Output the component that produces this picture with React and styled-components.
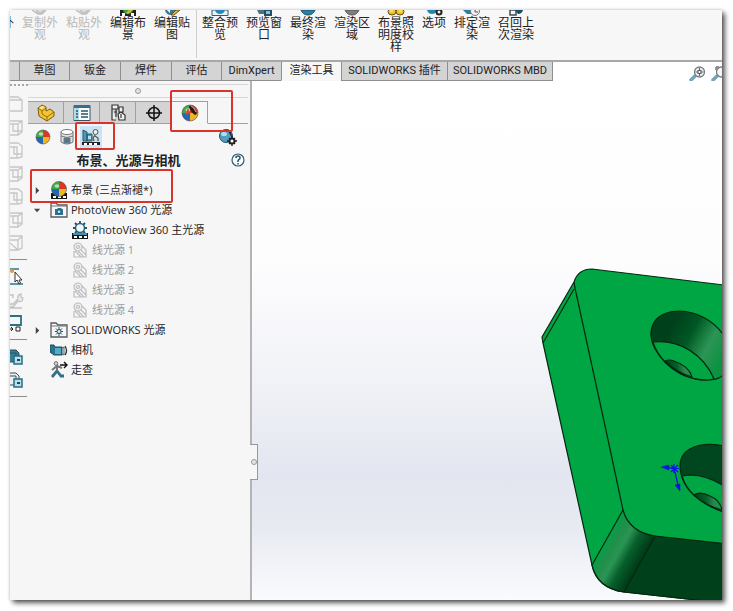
import React from "react";
import styled, { createGlobalStyle } from "styled-components";

const ribbonItems = [
  { label: "复制外观", icon: "gray", disabled: true },
  { label: "粘贴外观", icon: "gray", disabled: true },
  { label: "编辑布景", icon: "scene" },
  { label: "编辑贴图", icon: "decal", last: true },
  { label: "整合预览", icon: "preview" },
  { label: "预览窗口", icon: "window" },
  { label: "最终渲染", icon: "final" },
  { label: "渲染区域", icon: "region" },
  { label: "布景照明度校样", icon: "proof" },
  { label: "选项", icon: "options", narrow: true },
  { label: "排定渲染", icon: "schedule" },
  { label: "召回上次渲染", icon: "recall" },
];

const tabs = [
  { label: "草图", width: 50 },
  { label: "钣金", width: 51 },
  { label: "焊件", width: 51 },
  { label: "评估", width: 50 },
  { label: "DimXpert", width: 60 },
  { label: "渲染工具", width: 60, active: true },
  { label: "SOLIDWORKS 插件", width: 106 },
  { label: "SOLIDWORKS MBD", width: 106 },
];

const treeItems = [
  { label: "布景 (三点渐褪*)", icon: "sceneBall", arrow: "right", marked: true },
  { label: "PhotoView 360 光源", icon: "folderCamera", arrow: "down" },
  { label: "PhotoView 360 主光源", icon: "mainLight", child: true },
  { label: "线光源 1", icon: "light", child: true, muted: true },
  { label: "线光源 2", icon: "light", child: true, muted: true },
  { label: "线光源 3", icon: "light", child: true, muted: true },
  { label: "线光源 4", icon: "light", child: true, muted: true },
  { label: "SOLIDWORKS 光源", icon: "folderLight", arrow: "right" },
  { label: "相机", icon: "camera" },
  { label: "走查", icon: "walk" },
];

const RibbonIcon = ({ name }) => (
  <svg width="24" height="6" viewBox="0 0 24 6" aria-hidden="true">
    {name === "gray" && (
      <g fill="none" stroke="#bdbdbd" strokeWidth="1.500">
        <path d="M4 0l6 4h4l4-4" />
        <path d="M8 0q4 6 8 0" fill="#dcdcdc" />
      </g>
    )}
    {name === "scene" && (
      <g>
        <path d="M4 0h16v6H4z" fill="#222" />
        <path d="M6 3h3v3H6zM15 3h3v3h-3z" fill="#fff" />
        <path d="M7 0h10q-1 4-5 4T7 0z" fill="#35a23b" />
        <path d="M13 0h4l-5 4-2-1z" fill="#e5b528" />
      </g>
    )}
    {name === "decal" && (
      <g>
        <path d="M5 0h12q-1 5-6 5T5 0z" fill="#3c7896" />
        <path d="M11 5l5-5h4l-6 5z" fill="#efb52b" stroke="#6b4d10" />
        <path d="M7 0h3v3z" fill="#fff" />
      </g>
    )}
    {name === "preview" && (
      <g>
        <path d="M4 0h16v5.500H4z" fill="#eef5f8" stroke="#325c70" />
        <path d="M7 0h10q-1 4-5 4T7 0z" fill="#2589b5" />
      </g>
    )}
    {name === "window" && (
      <g>
        <path d="M5 0h8v4H7z" fill="#526f7c" />
        <path d="M12 0h8v6h-8z" fill="#244e63" />
        <path d="M14 1h4v3h-4z" fill="#80c2db" />
      </g>
    )}
    {name === "final" && <path d="M5 0h14q-2 5-7 5T5 0z" fill="#2581a9" stroke="#17526c" />}
    {name === "region" && <path d="M5 0h14q-2 5-7 5T5 0z" fill="#7c7f82" stroke="#555" />}
    {name === "proof" && (
      <g fill="#efc52d" stroke="#624d16">
        <ellipse cx="8" cy="1.500" rx="4" ry="3.500" />
        <ellipse cx="16" cy="1.500" rx="4" ry="3.500" />
        <path d="M6 1h3M15 1h3" stroke="#fff2a6" />
      </g>
    )}
    {name === "options" && (
      <g>
        <path d="M5 0h10q-1 4-5 4T5 0z" fill="#2585ae" />
        <circle cx="17" cy="2" r="2.500" fill="#eee" stroke="#222" strokeWidth="2" />
      </g>
    )}
    {name === "schedule" && (
      <g>
        <path d="M3 0h10v4H7z" fill="#287fa4" />
        <circle cx="15" cy="1" r="4.500" fill="#f2f2f2" stroke="#777" />
        <path d="M15 0v2h3" fill="none" stroke="#555" />
      </g>
    )}
    {name === "recall" && (
      <g>
        <path d="M6 0h6v5H6z" fill="#f5f5f5" stroke="#3b4d55" strokeWidth="1.500" />
        <path d="M11 0h8q-1 4-5 4z" fill="#174e67" />
      </g>
    )}
  </svg>
);

const ColorBall = ({ cx, cy, r }) => (
  <g>
    <path d={`M${cx} ${cy}L${cx - r} ${cy}A${r} ${r} 0 0 1 ${cx} ${cy - r}z`} fill="#3fac46" />
    <path d={`M${cx} ${cy}V${cy - r}A${r} ${r} 0 0 1 ${cx + r} ${cy}z`} fill="#df3427" />
    <path d={`M${cx} ${cy}H${cx + r}A${r} ${r} 0 0 1 ${cx} ${cy + r}z`} fill="#efb623" />
    <path d={`M${cx} ${cy}V${cy + r}A${r} ${r} 0 0 1 ${cx - r} ${cy}z`} fill="#2467b5" />
    <ellipse cx={cx - 2} cy={cy - 3} rx="2.500" ry="1.800" fill="#fff" opacity="0.6" />
    <circle cx={cx} cy={cy} r={r} fill="none" stroke="#4b4b4b" strokeWidth="0.600" />
  </g>
);

const Film = () => (
  <g>
    <path d="M1 12h16v6H1z" fill="#181818" />
    <path d="M3 15h3v2H3zM8 15h3v2H8zM13 15h3v2h-3z" fill="#fff" />
  </g>
);

const Icon = ({ name, size = 18 }) => (
  <svg width={size} height={size} viewBox="0 0 18 18" aria-hidden="true">
    {name === "part" && (
      <g stroke="#7d5b09" strokeLinejoin="round">
        <path d="M1 4l4-3 4 2v4l4-2 4 3v4l-7 5-8-5z" fill="#f5c52f" />
        <path d="M1 4l4 3v3l5 3 7-5M5 7l4-3M10 17v-4" fill="none" strokeWidth="0.800" />
        <path d="M5 2l3 1-3 2-3-1z" fill="#ffe694" stroke="none" />
      </g>
    )}
    {name === "properties" && (
      <g>
        <path d="M1 1.500h16v15H1z" fill="#fff" stroke="#315466" />
        <path d="M1 1h16v3H1z" fill="#31718c" />
        <path d="M1 4h5v12H1z" fill="#b5d9e6" />
        <path d="M3 7h2M3 10h2M3 13h2M8 7h7M8 10h7M8 13h7" stroke="#27566b" strokeWidth="1.400" />
      </g>
    )}
    {name === "config" && (
      <g fill="#f1f1f1" stroke="#333" strokeWidth="1.200">
        <path d="M3 1h6v4H3zM3 5v11h4M7 5v8" />
        <path d="M10 3h4v5h-4zM9 10l3-2 4 3v5h-6z" />
        <path d="M12 10v4M5 8h3" />
      </g>
    )}
    {name === "target" && (
      <g fill="none" stroke="#111" strokeWidth="1.500">
        <circle cx="9" cy="9" r="5.500" />
        <path d="M9 1v16M1 9h16" />
      </g>
    )}
    {name === "display" && (
      <g>
        <ColorBall cx={9} cy={9} r={8} />
        <path d="M9 9L4 11l3-7z" fill="#e64331" />
        <path d="M8 2q4-1 8 8l-2 1q-5-3-6-9z" fill="#251b18" />
        <path d="M10 2q3 1 5 6" fill="none" stroke="#b7aaa3" />
      </g>
    )}
    {name === "ball" && <ColorBall cx={9} cy={9} r={7} />}
    {name === "sceneBall" && (
      <g>
        <Film />
        <ColorBall cx={9} cy={8} r={7.5} />
      </g>
    )}
    {name === "database" && (
      <g stroke="#777">
        <path d="M3 4v10q6 4 12 0V4z" fill="#dfe2e4" />
        <ellipse cx="9" cy="4" rx="6" ry="2.500" fill="#fff" />
        <path d="M3 8q6 3 12 0" fill="none" />
        <path d="M6 10h6v5H6z" fill="#427d94" />
      </g>
    )}
    {name === "sceneLights" && (
      <g>
        <path d="M0 14h18v3H0z" fill="#222" />
        <path d="M2 15h3v2H2zM7 15h3v2H7zM12 15h3v2h-3z" fill="#fff" />
        <path d="M1 2l4 2v9H1zM5 6h5v7H5z" fill="#4d9ab5" stroke="#24566b" />
        <path d="M6 8h3v3H6z" fill="#b9dfeb" />
        <circle cx="13.500" cy="4" r="2.500" fill="#eee" stroke="#555" />
        <path d="M13 7l-2 3 1 3M13 8l3 2v3" fill="none" stroke="#555" strokeWidth="1.300" />
      </g>
    )}
    {name === "sphereGear" && (
      <g>
        <circle cx="7" cy="8" r="6.500" fill="#4e9fc0" stroke="#245268" />
        <ellipse cx="5" cy="6" rx="3" ry="2" fill="#b5dce9" />
        <path d="M8 1q5 2 5 9z" fill="#162833" />
        <circle cx="13" cy="13" r="2.500" fill="#fff" stroke="#222" strokeWidth="2" />
        <path d="M13 8v2M13 16v2M8 13h2M16 13h2M10 10l1 1M15 15l1 1M16 10l-1 1M11 15l-1 1" stroke="#222" strokeWidth="1.400" />
      </g>
    )}
    {(name === "folderCamera" || name === "folderLight") && (
      <g>
        <path d="M1 2h5l2 2h9v12H1z" fill="#f5f5f5" stroke="#57595b" strokeWidth="1.300" />
        <path d="M1 5h16" stroke="#777" />
        {name === "folderCamera" ? (
          <g>
            <path d="M5 8h2l1-1h3l1 1h1v6H5z" fill="#2a7896" />
            <circle cx="9" cy="10.800" r="2" fill="#b8e1ed" stroke="#174e64" />
          </g>
        ) : (
          <g stroke="#25556b">
            <path d="M9 6v9M5 10.500h8M6 7.500l6 6M12 7.500l-6 6" />
            <circle cx="9" cy="10.500" r="2" fill="#d6edf4" />
          </g>
        )}
      </g>
    )}
    {name === "mainLight" && (
      <g>
        <Film />
        <path d="M9 0v14M2 7h14M4 2l10 10M14 2L4 12" stroke="#1f5268" strokeWidth="1.800" />
        <circle cx="9" cy="7" r="4.500" fill="#edf7fa" stroke="#26617a" strokeWidth="1.500" />
        <path d="M2 12h14v2H2z" fill="#4293ae" />
      </g>
    )}
    {name === "light" && (
      <g fill="none" stroke="#bdbdbd" strokeWidth="1.200">
        <path d="M3 10v6h12V9l-4-4M4 10l6 6M7 10l6 6M10 9l5 5" />
        <circle cx="7" cy="6" r="4" fill="#eee" />
        <circle cx="7" cy="6" r="1.500" />
      </g>
    )}
    {name === "camera" && (
      <g>
        <path d="M0 4h4l1 2h7v8H4L0 11z" fill="#26758f" stroke="#234a59" />
        <path d="M5 7h6v6H5z" fill="#55acc6" />
        <path d="M12 7l2-1v8l-2-1z" fill="#d8e9ee" stroke="#234a59" strokeWidth="0.800" />
        <path d="M15 5q3 5 0 9" fill="none" stroke="#333" strokeWidth="1.400" />
      </g>
    )}
    {name === "walk" && (
      <g fill="none">
        <circle cx="6" cy="2.500" r="1.800" fill="#ddd" stroke="#666" />
        <path d="M7 5v5M2 9l5-4 5 2" stroke="#777" strokeWidth="2" />
        <path d="M7 10l-5 6M7 10l4 5h3" stroke="#2f708b" strokeWidth="2.800" />
        <path d="M10 4h6M14 1l3 3-3 3" stroke="#111" strokeWidth="1.400" />
      </g>
    )}
    {name === "help" && (
      <g fill="none" stroke="#2c5c74" strokeWidth="1.200">
        <circle cx="9" cy="9" r="6" fill="#fafcfc" />
        <path d="M7 7q0-2 2-2t2 2q0 1-1 1.500T9 10v1M9 12v1.500" strokeWidth="1.600" />
      </g>
    )}
    {(name === "zoomFit" || name === "zoomArea") && (
      <g>
        <path d="M6 10l-4 4" stroke="#78a4ba" strokeWidth="3.500" strokeLinecap="round" />
        <circle cx="10.500" cy="6" r="5" fill="#f5f7f8" stroke="#777d81" strokeWidth="1.300" />
        {name === "zoomFit" ? (
          <path d="M10.500 2v2M10.500 8v2M6.500 6h2M12.500 6h2M9 4.500h3v3H9z" fill="none" stroke="#5f6468" strokeWidth="1.200" />
        ) : (
          <path d="M5 1h3M5 1v3" fill="none" stroke="#777" strokeWidth="1.500" />
        )}
      </g>
    )}
  </svg>
);

/* side toolbar glyphs, the left half of each one is out of view */
const SideIcon = ({ name }) => (
  <svg width="18" height="20" viewBox="0 0 18 20" aria-hidden="true">
    {name.startsWith("cube") && (
      <g fill="none" stroke="#c6c6c6" strokeWidth="1.300">
        {name === "cube0" && <path d="M0 5h12v11H0M0 2h8l4 3" />}
        {name === "cube1" && <path d="M0 6h8v11H0M8 6l4-3v11l-4 3M0 3h12M3 6v7h9" />}
        {name === "cube2" && <path d="M0 2h8l4 3v11l-4 1H0M0 6h7v11M4 6v7h8" />}
        {name === "cube3" && <path d="M0 3h12v12l-4 2H0M0 7h8v10M8 7l4-4M0 10l8 7" />}
      </g>
    )}
    {name === "select" && (
      <g>
        <path d="M0 2h9M0 17h13" stroke="#2e7690" strokeWidth="1.500" />
        <circle cx="2" cy="4" r="2" fill="#df9736" />
        <path d="M5 5v10l2-2 2 4 1.500-1L9 13h3z" fill="#fff" stroke="#333" />
      </g>
    )}
    {name === "wrench" && (
      <path d="M0 14h3l5-5q-1-4 3-5v3l2 1-1 3q-3 1-4 0l-5 6H0M0 5h3v3M0 18h12" fill="#eee" stroke="#c2c2c2" strokeWidth="1.300" />
    )}
    {name === "screen" && (
      <g>
        <path d="M0 3h11v9H0" fill="none" stroke="#2b7088" strokeWidth="1.800" />
        <path d="M0 16h3M1 14l2 2-2 2" fill="none" stroke="#222" />
        <path d="M6 14h4v4H6z" fill="#fff" stroke="#222" />
      </g>
    )}
    {(name === "copyBlue" || name === "copyWhite") && (
      <g>
        <path d="M0 3h6l3 3v9H0" fill={name === "copyBlue" ? "#347f98" : "#eee"} stroke="#344c56" />
        <path d="M0 6h6v5" fill="none" stroke="#344c56" />
        <path d="M4 9h8v8H4z" fill="#b9dfea" stroke="#246d88" strokeWidth="1.500" />
        <path d="M7 12h3v2H7z" fill="#174d64" />
      </g>
    )}
  </svg>
);

const Model = () => (
  <svg width="190" height="340" viewBox="532 260 190 340" role="img" aria-label="Part">
    <defs>
      <linearGradient id="fillet" gradientUnits="userSpaceOnUse" x1="606" y1="539" x2="640" y2="558">
        <stop offset="0" stopColor="#02a045" />
        <stop offset="0.250" stopColor="#218f4b" />
        <stop offset="0.450" stopColor="#2b9454" />
        <stop offset="0.700" stopColor="#07602b" />
        <stop offset="1" stopColor="#003f1b" />
      </linearGradient>
      <linearGradient id="bore" gradientUnits="userSpaceOnUse" x1="672" y1="325" x2="724" y2="354">
        <stop offset="0" stopColor="#00401b" />
        <stop offset="0.350" stopColor="#005724" />
        <stop offset="0.500" stopColor="#127438" />
        <stop offset="0.700" stopColor="#2d9456" />
        <stop offset="1" stopColor="#0c9341" />
      </linearGradient>
      <linearGradient id="smallBore">
        <stop offset="0" stopColor="#00401b" />
        <stop offset="0.450" stopColor="#04602a" />
        <stop offset="0.700" stopColor="#2e8350" />
        <stop offset="1" stopColor="#06a044" />
      </linearGradient>
    </defs>
    <g stroke="#06280f" strokeWidth="1.200" strokeLinejoin="round">
      <path d="M574 282Q578 269 592 269L600 270L724 285V604L697 600L624 592Q597 588 592 565L543 343L542 337z" fill="#00a644" />
      <path d="M592 565L623 510Q629 532 655 536L624 592Q597 588 592 565z" fill="url(#fillet)" />
      <path d="M655 536L724 543.500V604L697 600L624 592z" fill="#00401b" />
      <path d="M574 282L575 288L607 435L623 510M574 289L543 343" fill="none" />
      <path d="M651 336C650 320 662 311 679 311C697 311 713 321 722 333C740 350 738 363 722 376Q717 380 707 380C690 380 677 374 665 362Q652 349 651 336z" fill="url(#bore)" />
      <path d="M653 342C680 339 704 355 714 379Q711 380 707 380C690 380 677 374 665 362Q656 352 653 342z" fill="#00a644" />
      <path d="M665 361Q669 359 674 361Q689 366 692 377Q677 373 665 361z" fill="url(#smallBore)" />
      <path d="M724 446C700 441 681 448 680 465Q680 483 695 496Q708 507 724 512z" fill="#00461e" />
      <path d="M682 476Q702 472 724 486V512Q708 507 695 496Q685 487 682 476z" fill="#00a644" />
      <path d="M694 495Q700 491 710 496Q720 500 722 510Q706 506 694 495z" fill="url(#smallBore)" />
    </g>
    <g stroke="#0b17d8" fill="#0b17d8" strokeWidth="1.200">
      <path d="M674 468L666 467.500M674 468L678 485M671 465l7 7M678 465l-7 7M674 464v9M670 468.500h9" />
      <path d="M661 467l8-2v5zM680 491l-5-6 5-1z" strokeWidth="0.500" />
    </g>
  </svg>
);

const sideTools = [
  "cube0", "cube1", "cube2", "cube1", "cube2", "cube1", "cube3", "line",
  "select", "wrench", "screen", "line",
  "copyBlue", "copyWhite", "line",
];

const panelTabs = ["part", "properties", "config", "target", "display"];

const App = () => {
  return (
    <>
      <GlobalStyle />
      <Page>
        <Window>
          <Ribbon>
            <CutLabel>外</CutLabel>
            {ribbonItems.map((item) => (
              <React.Fragment key={item.label}>
                <RibbonButton disabled={item.disabled} $narrow={item.narrow}>
                  <RibbonIcon name={item.icon} />
                  <span>{item.label}</span>
                </RibbonButton>
                {item.last && <Separator />}
              </React.Fragment>
            ))}
          </Ribbon>
          <TabStrip>
            <TabStub />
            {tabs.map((tab) => (
              <Tab key={tab.label} $width={tab.width} $active={tab.active}>
                {tab.label}
              </Tab>
            ))}
            <ViewTools>
              <IconButton aria-label="Zoom to fit"><Icon name="zoomFit" /></IconButton>
              <CutButton aria-label="Zoom to area"><Icon name="zoomArea" /></CutButton>
            </ViewTools>
          </TabStrip>
          <Workspace>
            <SideBar>
              <Dots />
              {sideTools.map((tool, i) =>
                tool === "line" ? (
                  <SideLine key={i} />
                ) : (
                  <SideButton key={i} aria-label={tool}>
                    <SideIcon name={tool} />
                  </SideButton>
                )
              )}
            </SideBar>
            <Panel>
              <Grip><Knob /></Grip>
              <PanelTabs>
                {panelTabs.map((tab) => (
                  <PanelTab key={tab} aria-label={tab} $active={tab === "display"}>
                    <Icon name={tab} />
                    {tab === "display" && <TabMark />}
                  </PanelTab>
                ))}
                <PanelTabsEnd />
              </PanelTabs>
              <PanelTools>
                <IconButton aria-label="Appearances"><Icon name="ball" /></IconButton>
                <IconButton aria-label="Decals"><Icon name="database" /></IconButton>
                <SelectedButton aria-label="Scene, lights and cameras">
                  <Icon name="sceneLights" />
                  <ToolMark />
                </SelectedButton>
                <EndButton aria-label="Render options"><Icon name="sphereGear" /></EndButton>
              </PanelTools>
              <TitleRow>
                <Title>布景、光源与相机</Title>
                <IconButton aria-label="Help"><Icon name="help" /></IconButton>
              </TitleRow>
              <Tree>
                {treeItems.map((item) => (
                  <li key={item.label}>
                    <TreeRow $child={item.child} $muted={item.muted}>
                      <Arrow viewBox="0 0 8 8" aria-hidden="true">
                        {item.arrow === "right" && <path d="M2 0l4 4-4 4z" />}
                        {item.arrow === "down" && <path d="M0 2h7l-3.500 4z" />}
                      </Arrow>
                      <Icon name={item.icon} />
                      <span>{item.label}</span>
                      {item.marked && <RowMark />}
                    </TreeRow>
                  </li>
                ))}
              </Tree>
            </Panel>
            <Viewport>
              <Handle aria-label="Collapse panel"><Knob /></Handle>
              <Model />
            </Viewport>
          </Workspace>
        </Window>
      </Page>
    </>
  );
};

const GlobalStyle = createGlobalStyle`
  * {
    box-sizing: border-box;
  }

  body {
    margin: 0;
    background: #fff;
    font-family: "Open Sans", "Noto Sans CJK SC", sans-serif;
    font-size: 12px;
    color: #222;
  }

  button {
    position: relative;
    margin: 0;
    padding: 0;
    border: none;
    background: none;
    font: inherit;
    color: inherit;
  }

  svg {
    display: block;
    flex: none;
  }
`;

const Page = styled.div`
  display: flex;
  min-height: 100vh;
  padding: 10px 11px 11px 10px;
`;

const Window = styled.div`
  display: flex;
  flex-direction: column;
  flex: 1;
  min-width: 0;
  background: #fff;
  box-shadow: 3px 3px 5px rgba(0, 0, 0, 0.65), 0 0 3px rgba(0, 0, 0, 0.2);
`;

const Ribbon = styled.div`
  display: flex;
  height: 52px;
  overflow: hidden;
  background: #f7f7f7;
  border-bottom: 2px solid #a8a8a8;
`;

const CutLabel = styled.div`
  display: flex;
  justify-content: flex-end;
  width: 4px;
  margin-right: 4px;
  padding-top: 7px;
  overflow: hidden;
  line-height: 12px;
`;

const RibbonButton = styled.button`
  display: flex;
  flex-direction: column;
  align-items: center;
  width: ${({ $narrow }) => ($narrow ? "32px" : "44px")};
  line-height: 12px;
  text-align: center;
  white-space: normal;

  span {
    width: ${({ $narrow }) => ($narrow ? "24px" : "36px")};
    padding-top: 1px;
  }

  &:disabled {
    color: #b9b9b9;
  }
`;

const Separator = styled.div`
  width: 1px;
  height: 48px;
  margin: 0 1px 0 2px;
  background: #cfcfcf;
`;

const TabStrip = styled.div`
  display: flex;
  height: 19px;
  background: #fff;
`;

const TabStub = styled.div`
  width: 9px;
  background: #d4d4d4;
  border-bottom: 1px solid #8f8f8f;
`;

const Tab = styled.button`
  width: ${({ $width }) => $width}px;
  background: ${({ $active }) => ($active ? "#f7f7f7" : "#d4d4d4")};
  border-left: 1px solid #8f8f8f;
  border-bottom: 1px solid ${({ $active }) => ($active ? "#f7f7f7" : "#8f8f8f")};
  font-family: Roboto, "Noto Sans CJK SC", sans-serif;
  font-size: 11px;
  line-height: 18px;
  white-space: nowrap;

  &:nth-last-child(2) {
    border-right: 1px solid #8f8f8f;
  }
`;

const ViewTools = styled.div`
  display: flex;
  gap: 4px;
  margin-left: auto;
  padding-top: 4px;
`;

const IconButton = styled.button`
  width: 18px;
  height: 18px;
`;

const CutButton = styled(IconButton)`
  width: 11px;
  overflow: hidden;
`;

const Workspace = styled.div`
  display: flex;
  flex: 1;
`;

const SideBar = styled.div`
  display: flex;
  flex-direction: column;
  width: 18px;
  padding-top: 3px;
  background: #f6f6f6;
`;

const Dots = styled.div`
  height: 2px;
  margin-bottom: 7px;
  border-top: 2px dotted #a5a5a5;
`;

const SideButton = styled.button`
  display: flex;
  align-items: center;
  height: 23px;
`;

const SideLine = styled.div`
  height: 1px;
  margin: 5px 1px 5px 0;
  background: #8c8c8c;
`;

const Panel = styled.div`
  display: flex;
  flex-direction: column;
  width: 224px;
  padding: 3px 2px 0 0;
  background: #f6f6f6;
  border-right: 2px solid #b4b4b6;
`;

const Grip = styled.div`
  display: flex;
  align-items: center;
  justify-content: center;
  height: 14px;
  border-top: 1px solid #d6d6d6;
  border-bottom: 1px solid #d6d6d6;
`;

const Knob = styled.span`
  width: 6px;
  height: 6px;
  border: 1px solid #999;
  border-radius: 50%;
  background: #e4e4e4;
`;

const PanelTabs = styled.div`
  display: flex;
  height: 23px;
  margin-top: 3px;
`;

const PanelTab = styled.button`
  display: flex;
  align-items: center;
  justify-content: center;
  width: 36px;
  background: ${({ $active }) => ($active ? "#f6f6f6" : "#d4d4d4")};
  border: 1px solid #a0a0a0;
  border-left-width: 0;
  border-bottom-color: ${({ $active }) => ($active ? "#f6f6f6" : "#a0a0a0")};
`;

const PanelTabsEnd = styled.div`
  flex: 1;
  border-bottom: 1px solid #a0a0a0;
`;

/* red call-outs drawn over the panel */
const Mark = styled.i`
  position: absolute;
  z-index: 1;
  border: 2px solid #d9332c;
  border-radius: 2px;
  pointer-events: none;
`;

const TabMark = styled(Mark)`
  top: -12px;
  left: -2px;
  width: 63px;
  height: 42px;
`;

const ToolMark = styled(Mark)`
  top: -4px;
  left: -5px;
  width: 40px;
  height: 28px;
`;

const RowMark = styled(Mark)`
  top: -11px;
  left: 2px;
  width: 143px;
  height: 34px;
`;

const PanelTools = styled.div`
  display: flex;
  align-items: center;
  gap: 6px;
  height: 25px;
  padding: 0 11px 0 6px;
`;

const SelectedButton = styled.button`
  display: flex;
  align-items: center;
  justify-content: center;
  width: 22px;
  height: 22px;
  margin-left: -2px;
  background: #cbe4f5;
`;

const EndButton = styled(IconButton)`
  margin-left: auto;
`;

const TitleRow = styled.div`
  display: flex;
  align-items: center;
  height: 22px;
  padding-right: 1px;
`;

const Title = styled.h2`
  flex: 1;
  margin: 0;
  font-size: 13px;
  font-weight: bold;
  line-height: 20px;
  text-align: center;
`;

const Tree = styled.ul`
  margin: 9px 0 0;
  padding: 0;
  list-style: none;
`;

const TreeRow = styled.button`
  display: flex;
  align-items: center;
  width: 100%;
  height: 20px;
  padding-left: ${({ $child }) => ($child ? "27px" : "6px")};
  color: ${({ $muted }) => ($muted ? "#9a9a9a" : "#222")};
  font-size: 11px;
  line-height: 20px;
  white-space: nowrap;

  span {
    margin-left: 3px;
  }
`;

const Arrow = styled.svg`
  width: 7px;
  height: 7px;
  margin-right: 9px;
  fill: #444;
`;

const Viewport = styled.div`
  position: relative;
  display: flex;
  flex: 1;
  align-items: flex-end;
  justify-content: flex-end;
  min-width: 0;
  background: linear-gradient(#fff 0%, #fdfdfe 35%, #f1f2f7 58%, #e3e6f0 76%, #e8eaf2 86%, #fafbfd 100%);
`;

const Handle = styled.button`
  position: absolute;
  top: 70%;
  left: -2px;
  display: flex;
  align-items: center;
  justify-content: center;
  width: 8px;
  height: 36px;
  background: #f6f6f6;
  border: 1px solid #98989c;
  border-left: none;
`;

export default App;
